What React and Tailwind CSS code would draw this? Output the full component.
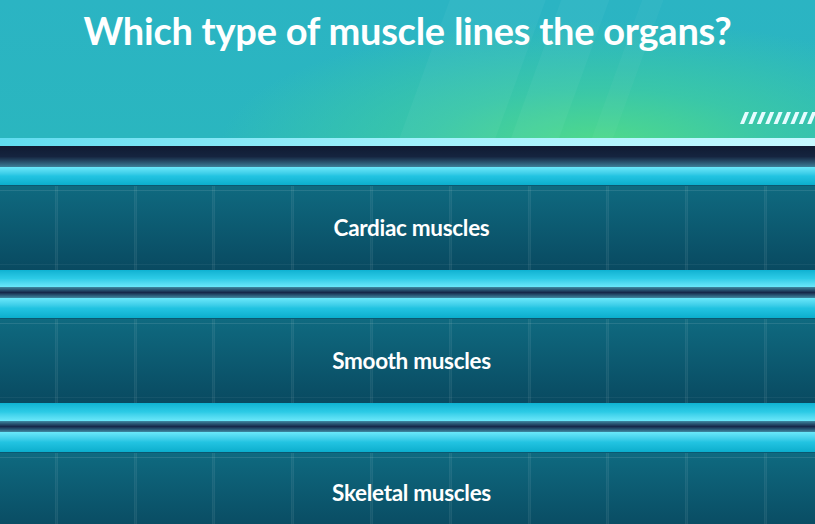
import React from "react";

function GridLines() {
  const cells = Array.from({ length: 12 });
  return (
    <div className="absolute inset-0 overflow-hidden pointer-events-none">
      <div className="absolute left-0 right-0 top-[4px] h-[1px] bg-white/10" />
      <div className="absolute left-0 right-0 bottom-[5px] h-[1px] bg-white/5" />
      <div className="flex h-full -ml-[21px]">
        {cells.map((_, i) => (
          <div key={i} className="w-[78.8px] shrink-0 h-full flex justify-end">
            <div className="w-[3px] h-full bg-white/[0.05] border-x border-white/[0.03]" />
          </div>
        ))}
      </div>
    </div>
  );
}

function Answer({ label, h }) {
  return (
    <div
      className={`relative ${h} bg-gradient-to-b from-[#0f6a80] to-[#094a61] border-t border-[#0b5870] flex items-center justify-center`}
    >
      <GridLines />
      <span className="relative text-white font-bold text-[22.5px] tracking-[-0.3px] pl-[8px]">
        {label}
      </span>
    </div>
  );
}

function BandDown({ h }) {
  return <div className={`${h} bg-gradient-to-b from-[#0eb2d2] via-[#2ccbe6] to-[#6ae8fa]`} />;
}
function BandUp({ h }) {
  return <div className={`${h} bg-gradient-to-b from-[#6ae8fa] via-[#22c4e2] to-[#0aaecd]`} />;
}
function DarkLine({ h }) {
  return <div className={`${h} bg-gradient-to-b from-[#3f8aa2] via-[#16294a] to-[#3f8aa2]`} />;
}

export default function App() {
  return (
    <div
      className="w-[815px] h-[524px] overflow-hidden bg-[#0a4f66] flex flex-col"
      style={{ fontFamily: "Lato, 'Open Sans', sans-serif" }}
    >
      {/* Header */}
      <div className="relative h-[138px] shrink-0 overflow-hidden bg-gradient-to-b from-[#2bb4c3] to-[#2ab6bf]">
        <div className="absolute left-[220px] top-[20px] w-[760px] h-[250px] rounded-full bg-[radial-gradient(closest-side,rgba(80,218,138,1),rgba(66,208,156,0.65)_45%,rgba(43,180,195,0)_100%)]" />
        <div className="absolute left-[420px] -top-[40px] w-[90px] h-[260px] bg-white/[0.035] rotate-[20deg]" />
        <div className="absolute left-[530px] -top-[40px] w-[45px] h-[260px] bg-white/[0.035] rotate-[20deg]" />
        <div className="absolute left-[610px] -top-[40px] w-[20px] h-[260px] bg-white/[0.03] rotate-[20deg]" />
        <h1 className="relative text-center text-white font-bold text-[38px] leading-none pt-[11px] tracking-[-0.25px]">
          Which type of muscle lines the organs?
        </h1>
        <svg className="absolute left-[740px] top-[112px]" width="80" height="12" viewBox="0 0 80 12">
          {Array.from({ length: 10 }).map((_, i) => (
            <polygon
              key={i}
              points={`${i * 8.4 + 5},0 ${i * 8.4 + 9},0 ${i * 8.4 + 4},12 ${i * 8.4},12`}
              fill="#e6fcff"
            />
          ))}
        </svg>
      </div>
      <div className="h-[8px] shrink-0 bg-gradient-to-r from-[#5fdcef] via-[#9ff0fb] to-[#c6f8ff]" />
      <div className="h-[21px] shrink-0 bg-gradient-to-b from-[#101b32] via-[#15243f] to-[#3c7f98]" />
      <BandUp h="h-[18px] shrink-0" />
      <Answer label="Cardiac muscles" h="h-[85px] shrink-0" />
      <BandDown h="h-[17px] shrink-0" />
      <DarkLine h="h-[11px] shrink-0" />
      <BandUp h="h-[20px] shrink-0" />
      <Answer label="Smooth muscles" h="h-[85px] shrink-0" />
      <BandDown h="h-[18px] shrink-0" />
      <DarkLine h="h-[11px] shrink-0" />
      <BandUp h="h-[20px] shrink-0" />
      <Answer label="Skeletal muscles" h="h-[80px] shrink-0" />
    </div>
  );
}
